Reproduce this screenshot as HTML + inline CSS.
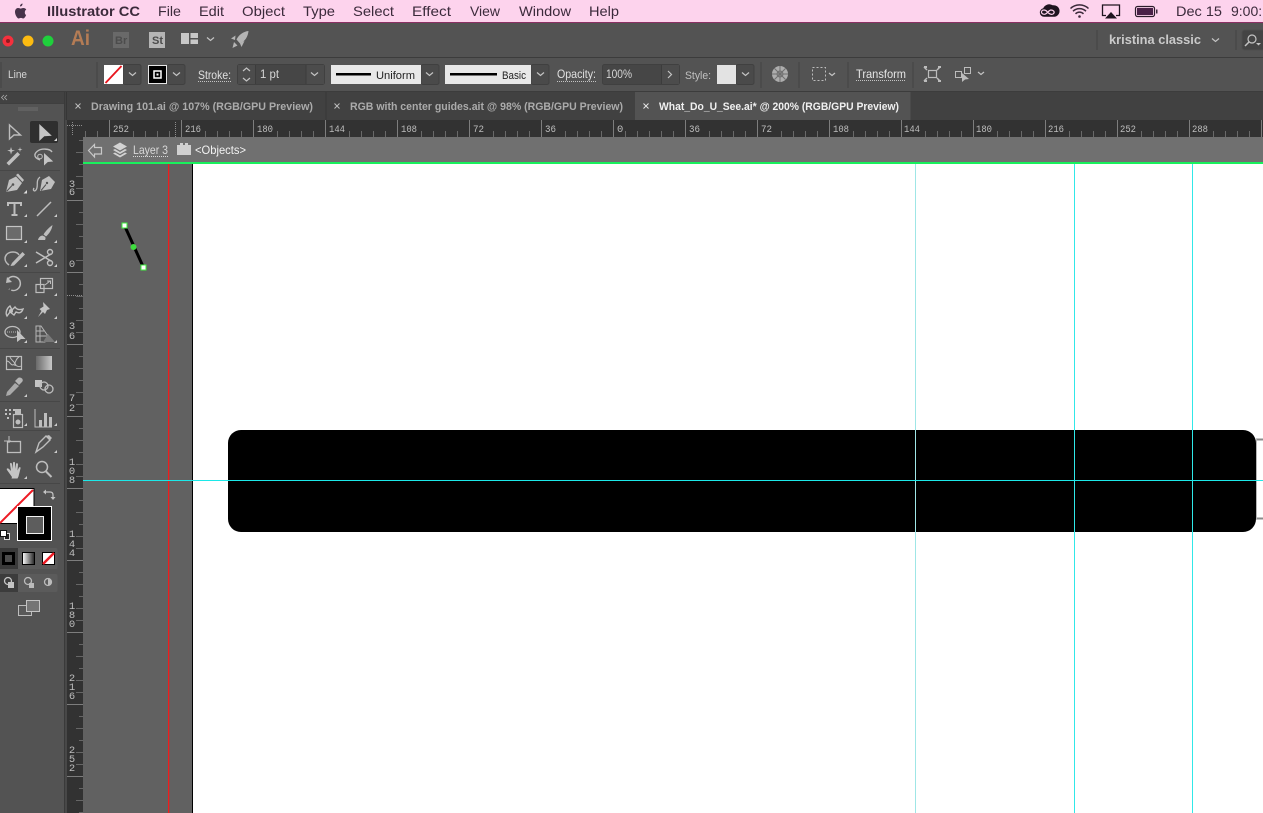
<!DOCTYPE html>
<html>
<head>
<meta charset="utf-8">
<title>Illustrator CC</title>
<style>
html,body{margin:0;padding:0;width:1263px;height:813px;overflow:hidden;background:#535353}
svg{display:block;position:absolute;left:0;top:0}
text{font-family:"Liberation Sans",sans-serif}
.m{font-size:14px;fill:#3b2a3b}
.c{font-size:11px;fill:#d6d6d6}
.tb{font-size:11px;font-weight:bold;fill:#ababab}
.r{font-family:"Liberation Mono",monospace;font-size:10.5px;fill:#bdbdbd}
.v{font-family:"Liberation Mono",monospace;font-size:10.5px;fill:#bdbdbd;text-anchor:middle}
.btn{fill:#4a4a4a;stroke:#404040}
.chev{fill:none;stroke:#c4c4c4;stroke-width:1.2}
</style>
</head>
<body>
<svg width="1263" height="813" viewBox="0 0 1263 813" xmlns="http://www.w3.org/2000/svg">
<defs>
<pattern id="hr" x="109" y="120" width="72" height="17" patternUnits="userSpaceOnUse">
<rect x="0" y="0" width="1" height="17" fill="#7d7d7d"/>
<rect x="12" y="11" width="1" height="6" fill="#696969"/><rect x="24" y="11" width="1" height="6" fill="#696969"/><rect x="36" y="11" width="1" height="6" fill="#696969"/><rect x="48" y="11" width="1" height="6" fill="#696969"/><rect x="60" y="11" width="1" height="6" fill="#696969"/>
</pattern>
<pattern id="vr" x="67" y="200" width="16" height="72" patternUnits="userSpaceOnUse">
<rect x="0" y="0" width="16" height="1" fill="#7d7d7d"/>
<rect x="12" y="12" width="4" height="1" fill="#666"/><rect x="9" y="24" width="7" height="1" fill="#666"/><rect x="12" y="36" width="4" height="1" fill="#666"/><rect x="9" y="48" width="7" height="1" fill="#666"/><rect x="9" y="60" width="7" height="1" fill="#666"/>
</pattern>
<linearGradient id="g1"><stop offset="0" stop-color="#6a6a6a"/><stop offset="1" stop-color="#c8c8c8"/></linearGradient>
<linearGradient id="g2"><stop offset="0" stop-color="#fff"/><stop offset="1" stop-color="#222"/></linearGradient>
</defs>

<!-- menu bar -->
<rect width="1263" height="23" fill="#fdd3ed"/>
<rect y="22" width="1263" height="1" fill="#8a2f63"/>
<path d="M20.500 6.500c1 0 1.800-1 2-2.200 .1-.3 0-.6 0-.8-1.100.1-2.300 1.100-2.500 2.300 0 .3 0 .6 .5 .7zM24.800 12.200c0-1.500 1-2.300 1.500-2.700-.9-1.200-2.200-1.500-2.900-1.500-1-.1-2 .6-2.700 .6-.6 0-1.600-.6-2.500-.6-1.500 0-3.200 1.200-3.200 3.900 0 3 2.200 6.600 3.700 6.600 .8 0 1.200-.6 2.200-.6 1.100 0 1.300 .6 2.200 .6 1.100 0 2.400-1.700 3-3.500-1.100-.5-1.300-1.800-1.300-2.800z" fill="#47324a"/>
<text x="47" y="16" class="m" font-weight="bold" textLength="93" lengthAdjust="spacingAndGlyphs">Illustrator CC</text>
<text x="158" y="16" class="m" textLength="23" lengthAdjust="spacingAndGlyphs">File</text>
<text x="199" y="16" class="m" textLength="25" lengthAdjust="spacingAndGlyphs">Edit</text>
<text x="242" y="16" class="m" textLength="43" lengthAdjust="spacingAndGlyphs">Object</text>
<text x="303" y="16" class="m" textLength="32" lengthAdjust="spacingAndGlyphs">Type</text>
<text x="353" y="16" class="m" textLength="41" lengthAdjust="spacingAndGlyphs">Select</text>
<text x="412" y="16" class="m" textLength="39" lengthAdjust="spacingAndGlyphs">Effect</text>
<text x="470" y="16" class="m" textLength="30" lengthAdjust="spacingAndGlyphs">View</text>
<text x="519" y="16" class="m" textLength="52" lengthAdjust="spacingAndGlyphs">Window</text>
<text x="589" y="16" class="m" textLength="30" lengthAdjust="spacingAndGlyphs">Help</text>
<!-- status icons -->
<path d="M1044 16.800a4.300 4.300 0 0 1-.8-8.500 6.500 6.500 0 0 1 9.500-3 5.800 5.800 0 0 1 2 11.500z" fill="#1f1420"/>
<path d="M1044.500 14.300c2.700 0 4-4.300 6.500-4.300s3.800 1.800 2.800 3.300-3.300 1.500-5.300-.3-2-3-4.500-3c-2 0-3 1.500-2.300 3 .5 .9 1.500 1.300 2.800 1.300z" fill="none" stroke="#fdd3ed" stroke-width="1.200"/>
<path d="M1070.500 8.500a13 13 0 0 1 18 0M1073 11.200a9.500 9.500 0 0 1 13 0M1075.500 13.800a5.500 5.500 0 0 1 8 0" fill="none" stroke="#3b2a3b" stroke-width="1.500"/><circle cx="1079.500" cy="16.500" r="1.300" fill="#3b2a3b"/>
<path d="M1106 15.500h-3.500v-10.500h17v10.500H1116" fill="none" stroke="#1f1420" stroke-width="1.300"/><path d="M1111 12l6 6.500h-12z" fill="#1f1420"/>
<rect x="1135.500" y="6.500" width="19" height="10" rx="2" fill="none" stroke="#2b1c2b" stroke-width="1.200"/><rect x="1137" y="8" width="16" height="7" fill="#4a2148"/><rect x="1156" y="9.500" width="1.500" height="4" fill="#3b2a3b"/>
<text x="1176" y="16" class="m" textLength="46" lengthAdjust="spacingAndGlyphs">Dec 15</text>
<text x="1231" y="16" class="m">9:00:</text>

<!-- app bar -->
<rect y="23" width="1263" height="34" fill="#535353"/>
<rect y="57" width="1263" height="1" fill="#3c3c3c"/>
<circle cx="8" cy="41" r="5.500" fill="#f5303d"/><circle cx="8" cy="41" r="2" fill="#8e1a1f"/>
<circle cx="28" cy="41" r="5.500" fill="#fdbb11"/>
<circle cx="48" cy="41" r="5.500" fill="#1fd03c"/>
<text x="71" y="45" font-weight="bold" fill="#b47c55" textLength="19" lengthAdjust="spacingAndGlyphs" style="font-size:21px">Ai</text>
<rect x="113" y="32" width="16" height="16" fill="#696969"/><text x="115" y="44" font-weight="bold" fill="#4c4c4c" style="font-size:11px">Br</text>
<rect x="149" y="32" width="16" height="16" fill="#b5b5b5"/><text x="152" y="44" font-weight="bold" fill="#4c4c4c" style="font-size:11px">St</text>
<path d="M181 33h8v11h-8zM190.500 33h7.500v5h-7.500zM190.500 39.500h7.500v4.500h-7.500z" fill="#c8c8c8"/>
<path d="M207 37.500l3.500 3 3.500-3" class="chev"/>
<path d="M248.500 31c-5 .5-9.500 3.500-12 8.500l3.500 4c5-2 8-7 8.500-12.500zM235.500 35.500l-4.500 3 4 1.500zM244.500 41l-3 6-1.500-3.500zM234 42l3.500 3.500-5 2.500z" fill="#b4b4b4"/>
<rect x="1096" y="30" width="2" height="20" fill="#4b4b4b"/>
<text x="1109" y="44" font-weight="bold" fill="#cacaca" textLength="92" lengthAdjust="spacingAndGlyphs" style="font-size:13px">kristina classic</text>
<path d="M1212 38.500l3.500 3 3.500-3" class="chev"/>
<rect x="1235" y="30" width="2" height="20" fill="#4b4b4b"/>
<rect x="1242" y="30" width="24" height="20" rx="3" fill="#444" stroke="#4c4c4c"/>
<circle cx="1252" cy="39" r="4" fill="none" stroke="#c4c4c4" stroke-width="1.200"/><path d="M1249 42l-4 4" stroke="#c4c4c4" stroke-width="1.500"/><path d="M1256 43h5l-2.500 2.500z" fill="#c4c4c4"/>

<!-- control bar -->
<rect y="58" width="1263" height="33" fill="#535353"/>
<rect y="91" width="1263" height="1" fill="#3c3c3c"/>
<rect x="0" y="62" width="2" height="26" fill="#4b4b4b"/>
<text x="8" y="78" class="c" textLength="19" lengthAdjust="spacingAndGlyphs" style="font-size:11px">Line</text>
<rect x="96" y="62" width="2" height="26" fill="#4b4b4b"/>
<rect x="123" y="64.500" width="18" height="20" rx="2" class="btn"/>
<rect x="104" y="65" width="19" height="19" fill="#fff"/><path d="M105.500 83l16-17" stroke="#e8141c" stroke-width="1.800"/>
<path d="M129 72.500l3.500 3 3.500-3" class="chev"/>
<rect x="167" y="64.500" width="18" height="20" rx="2" class="btn"/>
<rect x="148.500" y="65.500" width="18" height="18" fill="#000" stroke="#e6e6e6"/><rect x="154" y="71" width="7" height="7" fill="none" stroke="#fff" stroke-width="1.500"/><rect x="156.500" y="73.500" width="2" height="2" fill="#fff"/>
<path d="M173 72.500l3.500 3 3.500-3" class="chev"/>
<text x="198" y="79" class="c" textLength="33" lengthAdjust="spacingAndGlyphs" style="font-size:12px;fill:#e0e0e0">Stroke:</text>
<path d="M198 81.500h33" stroke="#c4c4c4" stroke-dasharray="1 1"/>
<rect x="237.500" y="64.500" width="87" height="20" rx="2" fill="#464646" stroke="#404040"/>
<rect x="238" y="65" width="17" height="19" fill="#4c4c4c"/>
<rect x="306" y="65" width="18" height="19" fill="#4c4c4c"/>
<path d="M255.500 65v19M306 65v19" stroke="#3c3c3c"/>
<path d="M243 71l3.500-3 3.500 3M243 78l3.500 3 3.500-3" class="chev"/>
<text x="260" y="78" class="c" textLength="19" lengthAdjust="spacingAndGlyphs" style="font-size:12px">1 pt</text>
<path d="M311 72.500l3.500 3 3.500-3" class="chev"/>
<rect x="421" y="64.500" width="18" height="20" rx="2" class="btn"/>
<rect x="331" y="65" width="90" height="19" fill="#e8e8e8"/>
<rect x="336" y="73" width="35" height="2.500" fill="#000"/>
<text x="376" y="79" fill="#222" textLength="39" lengthAdjust="spacingAndGlyphs" style="font-size:11px">Uniform</text>
<path d="M426 72.500l3.500 3 3.500-3" class="chev"/>
<rect x="531" y="64.500" width="18" height="20" rx="2" class="btn"/>
<rect x="445" y="65" width="86" height="19" fill="#e8e8e8"/>
<rect x="450" y="73" width="47" height="2.500" fill="#000"/>
<text x="502" y="79" fill="#222" textLength="24" lengthAdjust="spacingAndGlyphs" style="font-size:11px">Basic</text>
<path d="M537 72.500l3.500 3 3.500-3" class="chev"/>
<text x="557" y="78" class="c" textLength="39" lengthAdjust="spacingAndGlyphs" style="font-size:12px;fill:#e0e0e0">Opacity:</text>
<path d="M557 81.500h39" stroke="#c4c4c4" stroke-dasharray="1 1"/>
<rect x="602.500" y="64.500" width="77" height="20" rx="2" fill="#464646" stroke="#404040"/>
<rect x="662" y="65" width="17" height="19" fill="#4c4c4c"/>
<path d="M661.500 65v19" stroke="#3c3c3c"/>
<text x="606" y="78" class="c" textLength="26" lengthAdjust="spacingAndGlyphs" style="font-size:11.500px">100%</text>
<path d="M668 71l3.500 3.500-3.500 3.500" class="chev"/>
<text x="685" y="79" fill="#c0c0c0" textLength="26" lengthAdjust="spacingAndGlyphs" style="font-size:11px">Style:</text>
<rect x="736" y="64.500" width="18" height="20" rx="2" class="btn"/>
<rect x="717" y="65" width="19" height="19" fill="#e3e3e3"/>
<path d="M742 72.500l3.500 3 3.500-3" class="chev"/>
<rect x="760" y="62" width="2" height="26" fill="#4b4b4b"/>
<circle cx="780" cy="74" r="8" fill="#adadad"/><path d="M772 74h16M780 66v16M774.500 68.500l11 11M785.500 68.500l-11 11" stroke="#6f6f6f"/><circle cx="780" cy="74" r="3" fill="none" stroke="#6f6f6f"/>
<rect x="798" y="62" width="2" height="26" fill="#4b4b4b"/>
<rect x="812.500" y="67.500" width="13" height="13" fill="none" stroke="#bcbcbc" stroke-dasharray="2 2"/>
<path d="M829 73l3 2.500 3-2.500" class="chev"/>
<rect x="847" y="62" width="2" height="26" fill="#4b4b4b"/>
<text x="856" y="78" fill="#e6e6e6" textLength="50" lengthAdjust="spacingAndGlyphs" style="font-size:12px">Transform</text>
<path d="M856 80.500h50" stroke="#c4c4c4" stroke-dasharray="1 1"/>
<rect x="912" y="62" width="2" height="26" fill="#4b4b4b"/>
<rect x="928.500" y="70.500" width="8" height="7" fill="none" stroke="#bcbcbc" stroke-width="1.200"/>
<path d="M924 67l3 3M940 67l-3 3M924 81l3-3M940 81l-3-3" stroke="#bcbcbc" stroke-width="1.500"/>
<rect x="924" y="66" width="3" height="2" fill="#bcbcbc"/><rect x="938" y="66" width="3" height="2" fill="#bcbcbc"/><rect x="924" y="80" width="3" height="2" fill="#bcbcbc"/><rect x="938" y="80" width="3" height="2" fill="#bcbcbc"/>
<rect x="955.500" y="71.500" width="6" height="6" fill="none" stroke="#bcbcbc"/><rect x="964.500" y="67.500" width="6" height="6" fill="none" stroke="#bcbcbc"/>
<path d="M962 73v9l3-2.500 4-.5z" fill="#bcbcbc"/>
<path d="M978 72l3 2.500 3-2.500" class="chev"/>

<!-- tab bar -->
<rect y="92" width="1263" height="28" fill="#414141"/>
<rect x="0" y="92" width="65" height="11" fill="#424242"/>
<rect x="325.500" y="92" width="1" height="28" fill="#363636"/>
<rect x="66" y="92" width="1" height="28" fill="#363636"/>
<rect x="635" y="92" width="275.500" height="28" fill="#535353"/>
<path d="M75.500 103.500l5 5M80.500 103.500l-5 5" stroke="#bdbdbd"/>
<text x="91" y="110" class="tb" textLength="222" lengthAdjust="spacingAndGlyphs">Drawing 101.ai @ 107% (RGB/GPU Preview)</text>
<path d="M334.500 103.500l5 5M339.500 103.500l-5 5" stroke="#bdbdbd"/>
<text x="350" y="110" class="tb" textLength="273" lengthAdjust="spacingAndGlyphs">RGB with center guides.ait @ 98% (RGB/GPU Preview)</text>
<path d="M643.500 103.500l5 5M648.500 103.500l-5 5" stroke="#e6e6e6"/>
<text x="659" y="110" class="tb" style="fill:#f0f0f0" textLength="240" lengthAdjust="spacingAndGlyphs">What_Do_U_See.ai* @ 200% (RGB/GPU Preview)</text>

<!-- left panel -->
<rect x="0" y="103" width="64" height="710" fill="#535353"/>
<rect x="0" y="103" width="64" height="1" fill="#3f3f3f"/>
<rect x="64" y="92" width="1" height="721" fill="#3a3a3a"/>
<rect x="65" y="120" width="2" height="693" fill="#484848"/>
<path d="M4 95l-2.500 2.500 2.500 2.500M7 95l-2.500 2.500 2.500 2.500" fill="none" stroke="#aaa" stroke-width=".8"/>
<path d="M19 107v4M21 107v4M23 107v4M25 107v4M27 107v4M29 107v4M31 107v4M33 107v4M35 107v4M37 107v4" stroke="#6f6f6f"/>
<rect x="30" y="121" width="28" height="22" rx="2" fill="#2f2f2f"/>
<path d="M57 138v3h-3z" fill="#ddd"/>

<!-- dividers -->
<g fill="#474747"><rect x="0" y="170" width="60" height="1"/><rect x="0" y="272" width="60" height="1"/><rect x="0" y="348" width="60" height="1"/><rect x="0" y="401" width="60" height="1"/><rect x="0" y="430" width="60" height="1"/><rect x="0" y="483" width="60" height="1"/></g>

<!-- tools -->
<path d="M9.500 125v14l4.500-4h6.500z" fill="none" stroke="#bdbdbd" stroke-width="1.400"/>
<path d="M39.300 124v17l5-4.700 7.500-.6z" fill="#c4c4c4"/>
<path d="M6.500 163l11-11 2.500 2.500-11 11z" fill="#c0c0c0"/><path d="M11 147l1 3 3 .5-3 1-1 3-.8-3-3-1 3-.7zM20 147l.5 2 2 .5-2 .6-.5 2-.5-2-2-.6 2-.5z" fill="#c0c0c0"/>
<path d="M40 160c-5-2-7-5-3-8.500 4-3.500 13-3 15 .5" fill="none" stroke="#bdbdbd" stroke-width="1.400"/><path d="M44 153v12.500l3.800-3.500 5.400-.5z" fill="#c4c4c4"/><circle cx="40" cy="156.500" r="2.300" fill="none" stroke="#bdbdbd"/>

<path d="M6 192l3-12 7-3.500 6 6.500-5 7z" fill="#c0c0c0"/><path d="M16 175l2-1.500 6 6.500-1.500 2z" fill="#c0c0c0"/><path d="M6.500 191.500l5.500-6" stroke="#535353"/><circle cx="13" cy="184.500" r="1.300" fill="#535353"/>
<path d="M27 190v3.500h-3.500z" fill="#ddd"/>
<path d="M40 191l2-11 7-4 6 6-4 7z" fill="#c0c0c0" /><path d="M41 190.500l5-6" stroke="#535353"/><circle cx="47" cy="183" r="1.200" fill="#535353"/>
<path d="M40 177c-5 4-1 9-4 13-1.500 2-3.500 .5-2-2" fill="none" stroke="#bdbdbd" stroke-width="1.300"/>
<path d="M8 206v-3h13v3M14.500 203v12M11.500 215h6" fill="none" stroke="#bdbdbd" stroke-width="2"/>
<path d="M27 214v3h-3z" fill="#ccc"/>
<path d="M37 216l14-14" stroke="#bdbdbd" stroke-width="1.500"/><path d="M57 214v3h-3z" fill="#ccc"/>
<rect x="6.500" y="226.500" width="15" height="13" fill="#6b6b6b" stroke="#c4c4c4" stroke-width="1.200"/>
<path d="M27 240v3h-3z" fill="#ccc"/>
<path d="M52.500 225c-3 2-7 6-9 9.500l2.500 2c3-2.500 6-7 6.500-11.500zM42.500 235.500c-3 .5-4 2.500-4.500 4.500h7c1-1.500 .5-3 -.5-3.500z" fill="#bdbdbd"/><path d="M57 240v3h-3z" fill="#ccc"/>
<path d="M9 265c-7-5-4-13 4-13 3 0 5 1 6 3" fill="none" stroke="#b9b9b9" stroke-width="1.500"/><path d="M12 263l10.500-11 2.500 2.500-11 11-3.500 .5z" fill="#bdbdbd"/><path d="M27 264v3h-3z" fill="#ccc"/>
<path d="M36 252l15 9M36 263l15-9" stroke="#c0c0c0" stroke-width="1.500"/><circle cx="50" cy="252" r="2.500" fill="none" stroke="#c0c0c0" stroke-width="1.400"/><circle cx="50" cy="263" r="2.500" fill="none" stroke="#c0c0c0" stroke-width="1.400"/><path d="M57 264v3h-3z" fill="#ccc"/>

<path d="M8 279a7 7 0 1 1 1 10" fill="none" stroke="#bdbdbd" stroke-width="1.500" stroke-dasharray="30 2"/><path d="M7 277l-1 6 6-1z" fill="#bdbdbd"/><path d="M27 293v3h-3z" fill="#ccc"/>
<rect x="36" y="284.500" width="8" height="8" fill="none" stroke="#bdbdbd" stroke-width="1.200"/><rect x="40.500" y="278.500" width="12" height="10" fill="none" stroke="#bdbdbd" stroke-width="1.200"/><path d="M45 285l5-4M47 281h3.500v3" fill="none" stroke="#bdbdbd"/><path d="M57 293v3h-3z" fill="#ccc"/>
<path d="M7 316c-2-3 0-8 3-10l2 4 3-3c2 3 5 3 8 2-1 3-3 5-7 3l-2 3-4-3z" fill="none" stroke="#c0c0c0" stroke-width="1.400"/><circle cx="11" cy="311" r="2" fill="#c0c0c0"/><path d="M27 316v3h-3z" fill="#ccc"/>
<path d="M43 302l7 7-3 1-2 4-2-2-5 5 3.500-6-2-2 4-2.500z" fill="#c4c4c4"/><path d="M57 316v3h-3z" fill="#ccc"/>
<ellipse cx="12.500" cy="332" rx="7.500" ry="5.500" fill="none" stroke="#bdbdbd" stroke-width="1.300"/><path d="M7 332h9" stroke="#bdbdbd" stroke-dasharray="1 1"/><path d="M17 330v12l4-3h4.500z" fill="#c4c4c4"/><path d="M27 340v3h-3z" fill="#ccc"/>
<path d="M36 326v16h9l3-6-7-10zM36 331h8M36 336h11M40 326v16" fill="none" stroke="#b4b4b4"/><path d="M43 342l5-8 7 8z" fill="#7a7a7a"/><path d="M57 340v3h-3z" fill="#ccc"/>
<rect x="6.500" y="356.500" width="15" height="13" fill="none" stroke="#bdbdbd" stroke-width="1.200"/><path d="M7 361c4 1 3 4 6 4 3-1 2-6 6-8M10 357c1 3 4 4 6 8M14 365c3 0 4 3 7 1" fill="none" stroke="#bdbdbd"/>
<rect x="36" y="356" width="16" height="14" fill="url(#g1)"/>
<path d="M6 396l1-4 8-9 4 3-9 9z" fill="#a9a9a9"/><path d="M15 381l3-3c1-1 3-.5 4 .5s1 2.500 0 3.500l-3 3z" fill="#b4b4b4"/>
<path d="M27 394v3h-3z" fill="#ccc"/>
<rect x="35" y="380" width="7" height="7" fill="#c4c4c4"/><circle cx="44" cy="386" r="4" fill="none" stroke="#bdbdbd" stroke-width="1.300"/><circle cx="49" cy="389" r="4" fill="none" stroke="#bdbdbd" stroke-width="1.300"/>
<g fill="#c0c0c0"><rect x="5" y="409" width="2" height="2"/><rect x="9" y="409" width="2" height="2"/><rect x="13" y="409" width="2" height="2"/><rect x="5" y="413" width="2" height="2"/><rect x="9" y="413" width="2" height="2"/><rect x="7" y="417" width="2" height="2"/></g>
<rect x="13.500" y="414.500" width="9" height="13" fill="none" stroke="#bdbdbd" stroke-width="1.200"/><circle cx="18" cy="422" r="2.500" fill="#bdbdbd"/><rect x="15" y="409" width="6" height="5" fill="#bdbdbd"/><path d="M27 423v3h-3z" fill="#ccc"/>
<path d="M35 409v18h17" fill="none" stroke="#bdbdbd"/><rect x="39" y="420" width="3" height="7" fill="#bdbdbd"/><rect x="44" y="413" width="3" height="14" fill="#bdbdbd"/><rect x="49" y="417" width="3" height="10" fill="#bdbdbd"/><path d="M57 423v3h-3z" fill="#ccc"/>
<rect x="7.500" y="441.500" width="13" height="11" fill="none" stroke="#bdbdbd" stroke-width="1.300"/><path d="M4 441h7M9 436v7" stroke="#bdbdbd"/>
<path d="M36 452l3-9 7-7 4 4-7 7z" fill="none" stroke="#bdbdbd" stroke-width="1.400"/><path d="M46 436l3-1 3 3-2 2z" fill="#bdbdbd"/><path d="M57 450v3h-3z" fill="#ccc"/>
<path d="M12 477l-5-7c-1-2 1-2 2-1l2 2-1-7c0-1.500 1.500-1.500 2 0l1 5v-6c0-1.500 2-1.500 2 0v6l1-5c.5-1.500 2-1 2 .5l-.5 6 1.500-3c1-1 2 0 1.500 1l-2 8-1 2h-6z" fill="#c4c4c4"/><path d="M27 476v3h-3z" fill="#ccc"/>
<circle cx="42" cy="467" r="5.500" fill="none" stroke="#bdbdbd" stroke-width="1.500"/><path d="M46 471.500l5.500 5.500" stroke="#bdbdbd" stroke-width="2"/>

<!-- fill and stroke -->
<rect x="-1" y="488.500" width="35" height="35" fill="#fff" stroke="#000"/>
<path d="M0 523l33-33" stroke="#ee1b24" stroke-width="2"/>
<rect x="17.500" y="506.500" width="34" height="34" fill="#000" stroke="#fff"/>
<rect x="26.500" y="516.500" width="17" height="17" fill="#5d5d5d" stroke="#f2f2f2"/>
<path d="M44 492h6c2 0 3 1 3 3v3" fill="none" stroke="#c4c4c4" stroke-width="1.200"/><path d="M46 489.500l-3 2.500 3 2.500zM50.500 497l2.500 3 2.500-3z" fill="#c4c4c4"/>
<rect x="4.500" y="533.500" width="5" height="6" fill="#222" stroke="#ddd"/>
<rect x="0.500" y="530.500" width="6" height="6" fill="#fff" stroke="#111"/>

<!-- mode buttons -->
<rect x="0" y="548" width="57.500" height="21" rx="2" fill="#5b5b5b"/>
<rect x="0" y="548" width="18" height="21" fill="#3a3a3a"/>
<rect x="2" y="552" width="13" height="13" fill="#000"/><rect x="5" y="555" width="7" height="7" fill="#4c4c4c"/>
<rect x="22.500" y="552.500" width="12" height="12" fill="url(#g2)" stroke="#000"/>
<rect x="42.500" y="552.500" width="12" height="12" fill="#fff" stroke="#000"/><path d="M43 564l11-11" stroke="#ee1b24" stroke-width="2.500"/>
<rect x="0" y="574" width="57.500" height="18" rx="2" fill="#5b5b5b"/>
<rect x="0" y="574" width="18" height="18" fill="#3c3c3c"/>
<circle cx="8" cy="581" r="3.500" fill="#3c3c3c" stroke="#c4c4c4" stroke-width="1.300"/><rect x="8" y="582" width="6" height="6" fill="#c4c4c4"/>
<circle cx="28" cy="581" r="3.500" fill="#5b5b5b" stroke="#bbb" stroke-width="1.300"/><rect x="29" y="583" width="5" height="5" fill="#bbb"/>
<circle cx="48" cy="582" r="3.500" fill="#5b5b5b" stroke="#bbb" stroke-width="1.300"/><path d="M48 582v-3.500a3.500 3.500 0 0 1 0 7z" fill="#bbb"/>
<rect x="18.500" y="605.500" width="13" height="10" fill="#595959" stroke="#bdbdbd" stroke-width="1"/>
<rect x="26.500" y="600.500" width="13" height="11" fill="#757575" stroke="#c4c4c4" stroke-width="1"/>

<!-- horizontal ruler -->
<rect x="67" y="120" width="1196" height="17" fill="#323232"/>
<rect x="83" y="120" width="1180" height="17" fill="url(#hr)"/>
<g fill="#323232"><rect x="121" y="130" width="1" height="7"/><rect x="193" y="130" width="1" height="7"/><rect x="265" y="130" width="1" height="7"/><rect x="337" y="130" width="1" height="7"/><rect x="409" y="130" width="1" height="7"/><rect x="481" y="130" width="1" height="7"/><rect x="553" y="130" width="1" height="7"/><rect x="697" y="130" width="1" height="7"/><rect x="769" y="130" width="1" height="7"/><rect x="841" y="130" width="1" height="7"/><rect x="913" y="130" width="1" height="7"/><rect x="985" y="130" width="1" height="7"/><rect x="1057" y="130" width="1" height="7"/><rect x="1129" y="130" width="1" height="7"/><rect x="1201" y="130" width="1" height="7"/></g>
<path d="M67 125.500h16M72.500 122v13M175.500 122v15" stroke="#8d8d8d" stroke-dasharray="1 1"/>
<text x="113" y="132" class="r" textLength="16" lengthAdjust="spacingAndGlyphs">252</text>
<text x="185" y="132" class="r" textLength="16" lengthAdjust="spacingAndGlyphs">216</text>
<text x="257" y="132" class="r" textLength="16" lengthAdjust="spacingAndGlyphs">180</text>
<text x="329" y="132" class="r" textLength="16" lengthAdjust="spacingAndGlyphs">144</text>
<text x="401" y="132" class="r" textLength="16" lengthAdjust="spacingAndGlyphs">108</text>
<text x="473" y="132" class="r" textLength="11" lengthAdjust="spacingAndGlyphs">72</text>
<text x="545" y="132" class="r" textLength="11" lengthAdjust="spacingAndGlyphs">36</text>
<text x="617" y="132" class="r">0</text>
<text x="689" y="132" class="r" textLength="11" lengthAdjust="spacingAndGlyphs">36</text>
<text x="761" y="132" class="r" textLength="11" lengthAdjust="spacingAndGlyphs">72</text>
<text x="833" y="132" class="r" textLength="16" lengthAdjust="spacingAndGlyphs">108</text>
<text x="904" y="132" class="r" textLength="16" lengthAdjust="spacingAndGlyphs">144</text>
<text x="976" y="132" class="r" textLength="16" lengthAdjust="spacingAndGlyphs">180</text>
<text x="1048" y="132" class="r" textLength="16" lengthAdjust="spacingAndGlyphs">216</text>
<text x="1120" y="132" class="r" textLength="16" lengthAdjust="spacingAndGlyphs">252</text>
<text x="1192" y="132" class="r" textLength="16" lengthAdjust="spacingAndGlyphs">288</text>

<!-- vertical ruler -->
<rect x="67" y="137" width="16" height="676" fill="#323232"/>
<rect x="67" y="137" width="16" height="676" fill="url(#vr)"/>
<path d="M67 295.500h16" stroke="#8d8d8d" stroke-dasharray="1 1"/>
<text x="72" y="187" class="v">3</text><text x="72" y="195" class="v">6</text>
<text x="72" y="267" class="v">0</text>
<text x="72" y="329" class="v">3</text><text x="72" y="339" class="v">6</text>
<text x="72" y="401" class="v">7</text><text x="72" y="411" class="v">2</text>
<text x="72" y="465" class="v">1</text><text x="72" y="474" class="v">0</text><text x="72" y="483" class="v">8</text>
<text x="72" y="537" class="v">1</text><text x="72" y="547" class="v">4</text><text x="72" y="556" class="v">4</text>
<text x="72" y="609" class="v">1</text><text x="72" y="618" class="v">8</text><text x="72" y="627" class="v">0</text>
<text x="72" y="681" class="v">2</text><text x="72" y="690" class="v">1</text><text x="72" y="699" class="v">6</text>
<text x="72" y="753" class="v">2</text><text x="72" y="762" class="v">5</text><text x="72" y="771" class="v">2</text>

<!-- breadcrumb -->
<rect x="83" y="137" width="1180" height="25" fill="#707070"/>
<path d="M88.500 150.500l6-6v3h7v6.500h-7v3z" fill="none" stroke="#c8c8c8" stroke-width="1.200"/>
<path d="M120 142.500l7 4-7 4-7-4z" fill="#d2d2d2"/><path d="M113 150l2-1 5 3 5-3 2 1-7 4zM113 153.500l2-1 5 3 5-3 2 1-7 4z" fill="#d2d2d2"/>
<text x="133" y="154" fill="#d8d8d8" textLength="35" lengthAdjust="spacingAndGlyphs" style="font-size:12px">Layer 3</text>
<path d="M133 156.500h35" stroke="#d8d8d8" stroke-dasharray="1 1"/>
<path d="M177 145h3v-2h3v2h2v-2h3v2h3v10h-14z" fill="#d0d0d0"/>
<text x="195" y="154" fill="#f2f2f2" textLength="51" lengthAdjust="spacingAndGlyphs" style="font-size:12px">&lt;Objects&gt;</text>
<rect x="83" y="162" width="1180" height="2" fill="#18f05c"/>

<!-- canvas -->
<rect x="83" y="164" width="110" height="649" fill="#616161"/>
<rect x="192" y="164" width="1" height="649" fill="#000"/>
<rect x="193" y="164" width="1070" height="649" fill="#fff"/>
<rect x="168" y="164" width="1.300" height="649" fill="#f01c1c"/>

<!-- selected line -->
<path d="M124.500 225.500L143.500 267.500" stroke="#000" stroke-width="3"/>
<rect x="122" y="223" width="5" height="5" fill="#fff" stroke="#3ff03f" stroke-width="1"/>
<rect x="141" y="265" width="5" height="5" fill="#fff" stroke="#3ff03f" stroke-width="1"/>
<circle cx="133.500" cy="247" r="3" fill="#3fdc3f"/>

<!-- artwork -->
<path d="M1256 439.500h7M1256 518.500h7" stroke="#8b8b8b" stroke-width="2"/>
<path d="M1256.500 439v80" stroke="#b5b5b5"/>
<rect x="228" y="430" width="1028" height="102" rx="13" ry="13" fill="#000"/>

<!-- guides -->
<rect x="915" y="164" width="1" height="649" fill="#9fe6e6"/>
<rect x="1074" y="164" width="1" height="649" fill="#30e8e8"/>
<rect x="1192" y="164" width="1" height="649" fill="#30e8e8"/>
<rect x="83" y="480" width="1180" height="1" fill="#1ce8e8"/>
</svg>
</body>
</html>
